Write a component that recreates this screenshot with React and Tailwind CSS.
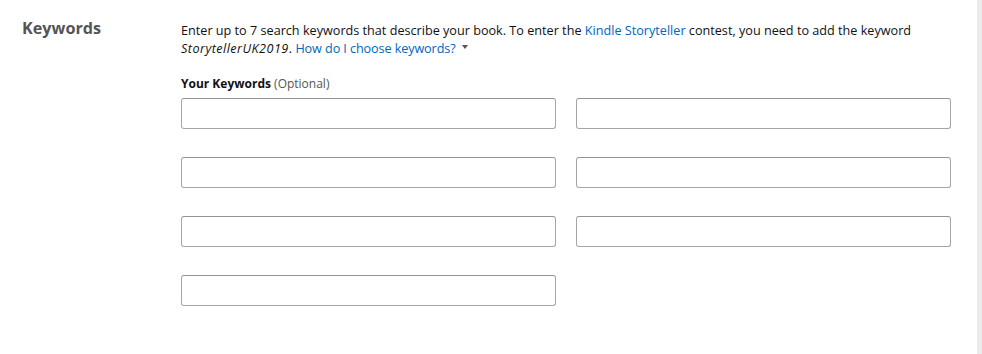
import React from "react";

function Field() {
  return (
    <input
      type="text"
      className="h-[31px] w-[375px] rounded-[3px] border border-[#a6a6a6] border-t-[#949494] bg-white px-2 text-[13px] outline-none"
    />
  );
}

export default function App() {
  return (
    <div className="flex h-[354px] w-[982px] bg-white text-[#111] [font-family:'Open_Sans',sans-serif]">
      <div className="flex flex-1">
        <div className="w-[181px] shrink-0 pl-[22px] pt-[17px]">
          <h2 className="text-[16.2px] font-bold leading-[22px] text-[#555]">Keywords</h2>
        </div>
        <div className="flex-1 pt-[21px]">
          <p className="w-[770px] text-[12.65px] leading-[18px]">
            Enter up to 7 search keywords that describe your book. To enter the{" "}
            <span className="text-[#0066c0]">Kindle Storyteller</span> contest, you need to add the keyword{" "}
            <i className="tracking-[0.45px]">StorytellerUK2019</i>.{" "}
            <span className="text-[#0066c0] tracking-[-0.1px]">How do I choose keywords?</span>
            <span className="ml-[6px] inline-block h-0 w-0 align-middle border-x-[3.5px] border-t-[4px] border-x-transparent border-t-[#555] relative top-[-3px]" />
          </p>
          <div className="mt-[19px] text-[12px] leading-[16px]">
            <span className="font-bold">Your Keywords</span>{" "}
            <span className="text-[#555]">(Optional)</span>
          </div>
          <div className="mt-[6px] grid w-[770px] grid-cols-[375px_375px] gap-x-[20px] gap-y-[28px]">
            <Field />
            <Field />
            <Field />
            <Field />
            <Field />
            <Field />
            <Field />
          </div>
        </div>
      </div>
      <div className="w-[5px] shrink-0 bg-[#ececec]" />
    </div>
  );
}
